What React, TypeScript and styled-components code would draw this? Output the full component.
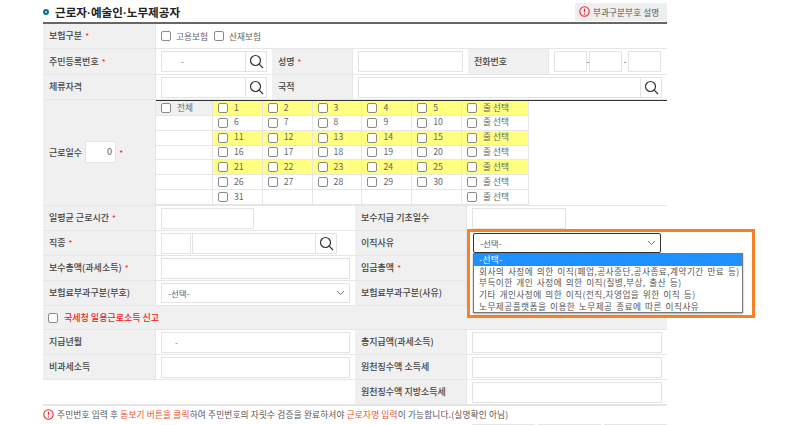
import React from "react";
import styled, { createGlobalStyle } from "styled-components";

const Global = createGlobalStyle`
  html, body { margin: 0; padding: 0; background: #fff; }
  body { font-family: "Noto Sans CJK KR", "Noto Sans", sans-serif; font-size: 9px; color: #444; overflow: hidden; }
  * { box-sizing: border-box; }
`;

const Page = styled.div`
  position: relative;
  width: 800px;
  height: 425px;
  padding-left: 43px;
  overflow: hidden;
`;
const Sheet = styled.div`
  width: 624px;
`;
const Header = styled.div`
  height: 22px;
  display: flex;
  align-items: center;
  justify-content: space-between;
  padding-top: 2px;
`;
const Title = styled.h2`
  margin: 0;
  display: flex;
  align-items: center;
  gap: 6px;
  font-size: 11.6px;
  font-weight: 700;
  line-height: 20px;
  color: #222;
`;
const TitleDot = styled.span`
  font-family: "Liberation Sans", sans-serif;
`;
const Bullet = styled.span`
  width: 6px;
  height: 6px;
  border-radius: 50%;
  border: 2px solid #0f6f8f;
  background: #9fd;
`;
const HelpButton = styled.div`
  width: 92px;
  height: 18px;
  margin-top: -1px;
  background: #eee;
  display: flex;
  align-items: center;
  gap: 3px;
  padding-left: 4px;
  font-size: 8.6px;
  color: #555;
  letter-spacing: 0.12px;
`;
const Table = styled.div`
  border-top: 2px solid #666;
`;
const Row = styled.div<{ $cols: string; $h?: number }>`
  display: grid;
  grid-template-columns: ${(p) => p.$cols};
  height: ${(p) => p.$h ?? 25}px;
  border-bottom: 1px solid #e6e6e6;
`;
const Label = styled.div`
  background: #f0f0f0;
  display: flex;
  align-items: center;
  padding-left: 6px;
  padding-bottom: 1px;
  border-right: 1px solid #e6e6e6;
  font-size: 9px;
  font-weight: 500;
  color: #444;
  white-space: nowrap;
`;
const Star = styled.span`
  color: #f03030;
  margin-left: 3px;
  font-size: 8px;
`;
const Value = styled.div<{ $gap?: number }>`
  display: flex;
  align-items: center;
  padding: 0 5px;
  gap: ${(p) => p.$gap ?? 0}px;
  min-width: 0;
`;
const Input = styled.div<{ $w?: number }>`
  height: 21px;
  width: ${(p) => (p.$w ? `${p.$w}px` : "100%")};
  flex: ${(p) => (p.$w ? "none" : "1")};
  border: 1px solid #e3e3e3;
  background: #fff;
  display: flex;
  align-items: center;
  color: #777;
`;
const DashText = styled.span<{ $left: number }>`
  padding-left: ${(p) => p.$left}px;
  color: #888;
`;
const SearchBox = styled.div<{ $w?: number }>`
  display: flex;
  height: 21px;
  flex: ${(p) => (p.$w ? "none" : "1")};
  width: ${(p) => (p.$w ? `${p.$w}px` : "auto")};
  border: 1px solid #e3e3e3;
`;
const SearchField = styled.div`
  flex: 1;
  display: flex;
  align-items: center;
`;
const SearchBtn = styled.div`
  width: 21px;
  border-left: 1px solid #e3e3e3;
  display: flex;
  align-items: center;
  justify-content: center;
`;
const Check = styled.span`
  display: inline-block;
  flex: none;
  width: 10px;
  height: 10px;
  border: 1px solid #8a8a8a;
  border-radius: 2px;
  background: #fff;
`;
const CheckLabel = styled.span`
  margin-left: 5px;
  margin-right: 6px;
  color: #666;
  font-size: 8.7px;
`;
const Dash = styled.span<{ $w: number }>`
  width: ${(p) => p.$w}px;
  flex: none;
  display: flex;
  justify-content: center;
  color: #666;
`;
const DaysRow = styled.div`
  display: grid;
  grid-template-columns: 113px 1fr;
  height: 106px;
  border-bottom: 1px solid #e6e6e6;
`;
const WorkLabel = styled(Label)`
  padding-left: 6px;
`;
const SmallNum = styled.div`
  width: 31px;
  height: 22px;
  margin-left: 3px;
  border: 1px solid #e3e3e3;
  background: #fff;
  text-align: right;
  line-height: 20px;
  padding-right: 3px;
  font-size: 9px;
  color: #777;
`;
const Days = styled.div`
  border-top: 1px solid #333;
  display: grid;
  grid-template-columns: 57px repeat(5, 49.8px) 67px;
  grid-auto-rows: 14.85px;
  align-content: start;
`;
const Day = styled.div<{ $yellow?: boolean; $gray?: boolean }>`
  background: ${(p) => (p.$yellow ? "#ffff80" : p.$gray ? "#f0f0f0" : "#fff")};
  border-right: 1px solid #e6e6e6;
  border-bottom: 1px solid #e6e6e6;
  display: flex;
  align-items: center;
  padding-left: 5px;
  gap: 6px;
  font-size: 8.7px;
  color: #666;
  line-height: 1;
`;
const SelectBox = styled.div<{ $focus?: boolean; $w?: string }>`
  height: 20px;
  width: ${(p) => p.$w ?? "100%"};
  border: 1px solid ${(p) => (p.$focus ? "#333" : "#e3e3e3")};
  border-radius: ${(p) => (p.$focus ? "2px" : "0")};
  display: flex;
  align-items: center;
  justify-content: space-between;
  padding: 0 4px 0 6px;
  font-size: 8.5px;
  color: #666;
  background: #fff;
`;
const RedRow = styled.div`
  height: 24px;
  background: #f0f0f0;
  border-bottom: 1px solid #e6e6e6;
  display: flex;
  align-items: center;
  padding-left: 5px;
  gap: 6px;
  color: #f02020;
  font-size: 9px;
  font-weight: 500;
`;
const Note = styled.div`
  display: flex;
  align-items: center;
  gap: 3px;
  height: 17px;
  font-size: 8.7px;
  color: #555;
  white-space: nowrap;
  letter-spacing: 0.15px;
  border-top: 1px solid #e6e6e6;
`;
const RedText = styled.span`
  color: #f0502a;
`;
const BottomButtons = styled.div`
  display: flex;
  justify-content: flex-end;
  gap: 3px;
  margin-top: 2px;
`;
const BottomButton = styled.div`
  width: 63px;
  height: 10px;
  border: 1px solid #e6e6e6;
`;
const Callout = styled.div`
  position: absolute;
  left: 467px;
  top: 229px;
  width: 288px;
  height: 89px;
  border: 3px solid #f98125;
  background: #fff;
  padding: 1px 0 0 3px;
`;
const Menu = styled.ul`
  position: absolute;
  left: 3px;
  top: 21px;
  width: 270px;
  margin: 0;
  padding: 0;
  list-style: none;
  background: #fff;
  border: 1px solid #777;
  box-shadow: 0 1px 2px rgba(0, 0, 0, 0.35);
`;
const MenuItem = styled.li<{ $active?: boolean }>`
  height: 11.7px;
  line-height: 11.7px;
  padding-left: 5px;
  font-size: 8.7px;
  white-space: nowrap;
  word-spacing: 1.3px;
  letter-spacing: 0.42px;
  background: ${(p) => (p.$active ? "#1e90ff" : "transparent")};
  color: ${(p) => (p.$active ? "#fff" : "#555")};
`;

const SearchIcon = () => (
  <svg width="15" height="15" viewBox="0 0 15 15" fill="none" stroke="#333" strokeWidth="1.2">
    <circle cx="6.5" cy="6.5" r="5" />
    <line x1="10.2" y1="10.2" x2="14" y2="14" />
  </svg>
);
const AlertIcon = () => (
  <svg width="11" height="11" viewBox="0 0 11 11" fill="none">
    <circle cx="5.5" cy="5.5" r="4.7" stroke="#ee2a35" strokeWidth="1.1" />
    <line x1="5.5" y1="2.6" x2="5.5" y2="6.3" stroke="#ee2a35" strokeWidth="1.2" />
    <circle cx="5.5" cy="8" r="0.7" fill="#ee2a35" />
  </svg>
);
const Chevron = () => (
  <svg width="9" height="6" viewBox="0 0 9 6" fill="none" stroke="#777" strokeWidth="1">
    <path d="M1 1l3.5 3.5L8 1" />
  </svg>
);

const BOTTOM = "113px 199px 112px 200px";
const dayRows = [
  [1, 2, 3, 4, 5],
  [6, 7, 8, 9, 10],
  [11, 12, 13, 14, 15],
  [16, 17, 18, 19, 20],
  [21, 22, 23, 24, 25],
  [26, 27, 28, 29, 30],
  [31, 0, 0, 0, 0],
];
const options = [
  "회사의 사정에 의한 이직(폐업,공사중단,공사종료,계약기간 만료 등)",
  "부득이한 개인 사정에 의한 이직(질병,부상, 출산 등)",
  "기타 개인사정에 의한 이직(전직,자영업을 위한 이직 등)",
  "노무제공플랫폼을 이용한 노무제공 종료에 따른 이직사유",
];

export default function App() {
  return (
    <Page>
      <Global />
      <Sheet>
        <Header>
          <Title>
            <Bullet />
            <span>
              근로자<TitleDot>·</TitleDot>예술인<TitleDot>·</TitleDot>노무제공자
            </span>
          </Title>
          <HelpButton>
            <AlertIcon />
            부과구분부호 설명
          </HelpButton>
        </Header>
        <Table>
          <Row $cols="113px 1fr">
            <Label>
              보험구분 <Star>*</Star>
            </Label>
            <Value>
              <Check />
              <CheckLabel>고용보험</CheckLabel>
              <Check />
              <CheckLabel>산재보험</CheckLabel>
            </Value>
          </Row>
          <Row $cols="113px 116px 81px 115px 81px 118px" $h={26}>
            <Label>
              주민등록번호 <Star>*</Star>
            </Label>
            <Value>
              <SearchBox>
                <SearchField>
                  <DashText $left={19}>-</DashText>
                </SearchField>
                <SearchBtn>
                  <SearchIcon />
                </SearchBtn>
              </SearchBox>
            </Value>
            <Label>
              성명 <Star>*</Star>
            </Label>
            <Value>
              <Input />
            </Value>
            <Label>전화번호</Label>
            <Value>
              <Input $w={33} />
              <Dash $w={2}>-</Dash>
              <Input $w={33} />
              <Dash $w={6}>-</Dash>
              <Input $w={33} />
            </Value>
          </Row>
          <Row $cols="113px 116px 81px 314px" $h={25}>
            <Label>체류자격</Label>
            <Value>
              <SearchBox>
                <SearchField />
                <SearchBtn>
                  <SearchIcon />
                </SearchBtn>
              </SearchBox>
            </Value>
            <Label>국적</Label>
            <Value>
              <SearchBox>
                <SearchField />
                <SearchBtn>
                  <SearchIcon />
                </SearchBtn>
              </SearchBox>
            </Value>
          </Row>
          <DaysRow>
            <WorkLabel>
              근로일수
              <SmallNum>0</SmallNum>
              <Star>*</Star>
            </WorkLabel>
            <Days>
              {dayRows.map((nums, r) => (
                <React.Fragment key={r}>
                  <Day $gray={r === 0}>
                    {r === 0 && (
                      <>
                        <Check />
                        전체
                      </>
                    )}
                  </Day>
                  {nums.map((n, c) => (
                    <Day key={c} $yellow={r % 2 === 0 && r < 6}>
                      {n > 0 && (
                        <>
                          <Check />
                          {n}
                        </>
                      )}
                    </Day>
                  ))}
                  <Day $yellow={r % 2 === 0 && r < 6}>
                    <Check />줄 선택
                  </Day>
                </React.Fragment>
              ))}
            </Days>
          </DaysRow>
          <Row $cols={BOTTOM}>
            <Label>
              일평균 근로시간 <Star>*</Star>
            </Label>
            <Value>
              <Input $w={93} />
            </Value>
            <Label>보수지급 기초일수</Label>
            <Value>
              <Input $w={94} />
            </Value>
          </Row>
          <Row $cols={BOTTOM}>
            <Label>
              직종 <Star>*</Star>
            </Label>
            <Value $gap={1}>
              <Input $w={30} />
              <SearchBox $w={145}>
                <SearchField />
                <SearchBtn>
                  <SearchIcon />
                </SearchBtn>
              </SearchBox>
            </Value>
            <Label>이직사유</Label>
            <Value />
          </Row>
          <Row $cols={BOTTOM}>
            <Label>
              보수총액(과세소득) <Star>*</Star>
            </Label>
            <Value>
              <Input />
            </Value>
            <Label>
              임금총액 <Star>*</Star>
            </Label>
            <Value />
          </Row>
          <Row $cols={BOTTOM}>
            <Label>보험료부과구분(부호)</Label>
            <Value>
              <SelectBox>
                -선택-
                <Chevron />
              </SelectBox>
            </Value>
            <Label>보험료부과구분(사유)</Label>
            <Value />
          </Row>
          <RedRow>
            <Check />
            국세청 일용근로소득 신고
          </RedRow>
          <Row $cols={BOTTOM}>
            <Label>지급년월</Label>
            <Value>
              <Input>
                <DashText $left={13}>-</DashText>
              </Input>
            </Value>
            <Label>총지급액(과세소득)</Label>
            <Value>
              <Input />
            </Value>
          </Row>
          <Row $cols={BOTTOM}>
            <Label>비과세소득</Label>
            <Value>
              <Input />
            </Value>
            <Label>원천징수액 소득세</Label>
            <Value>
              <Input />
            </Value>
          </Row>
          <Row $cols={BOTTOM}>
            <span />
            <span />
            <Label>원천징수액 지방소득세</Label>
            <Value>
              <Input />
            </Value>
          </Row>
        </Table>
        <Note>
          <AlertIcon />
          <span>
            주민번호 입력 후 <RedText>돋보기 버튼을 클릭</RedText>하여 주민번호의 자릿수 검증을 완료하셔야{" "}
            <RedText>근로자명 입력</RedText>이 가능합니다.(실명확인 아님)
          </span>
        </Note>
        <BottomButtons>
          <BottomButton />
          <BottomButton />
          <BottomButton />
        </BottomButtons>
      </Sheet>
      <Callout>
        <SelectBox $focus $w="188px">
          -선택-
          <Chevron />
        </SelectBox>
        <Menu>
          <MenuItem $active>-선택-</MenuItem>
          {options.map((o) => (
            <MenuItem key={o}>{o}</MenuItem>
          ))}
        </Menu>
      </Callout>
    </Page>
  );
}
